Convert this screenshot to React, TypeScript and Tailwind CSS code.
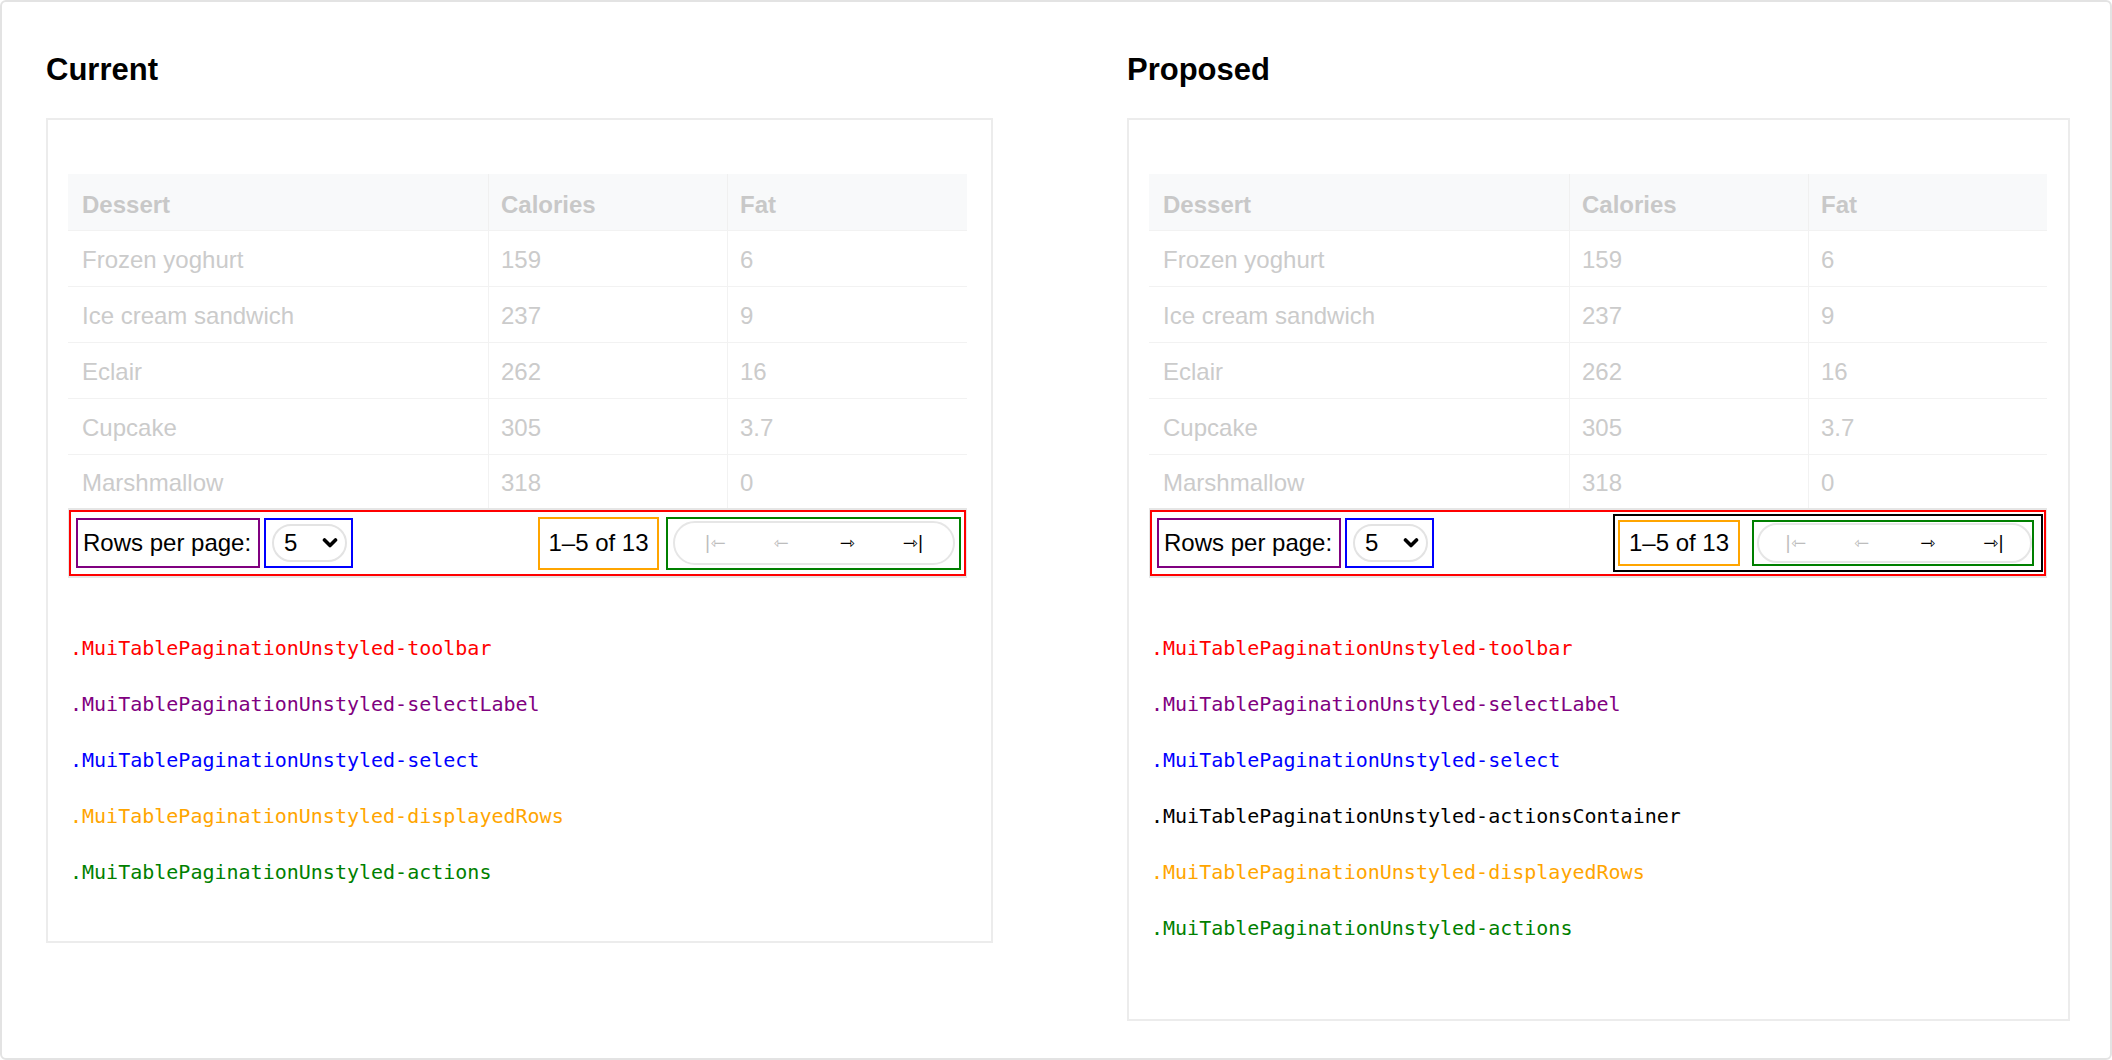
import React from "react"

const desserts: [string, string, string][] = [
  ["Frozen yoghurt", "159", "6"],
  ["Ice cream sandwich", "237", "9"],
  ["Eclair", "262", "16"],
  ["Cupcake", "305", "3.7"],
  ["Marshmallow", "318", "0"],
]

const sans = "font-['Liberation_Sans',Arial,sans-serif]"

function Chevron() {
  return (
    <svg width="16" height="12" viewBox="0 0 16 12" className="shrink-0">
      <polyline
        points="2.5,3 8,8.5 13.5,3"
        fill="none"
        stroke="#000"
        strokeWidth="3.6"
        strokeLinecap="round"
        strokeLinejoin="round"
      />
    </svg>
  )
}

function PageButton({ label, disabled }: { label: string; disabled?: boolean }) {
  return (
    <button
      className={
        "flex h-full w-[66px] items-center justify-center font-['DejaVu_Sans',sans-serif] text-[18px] leading-none " +
        (disabled ? "text-[#bdbdbd]" : "text-black")
      }
    >
      {label}
    </button>
  )
}

function Actions({ compact }: { compact?: boolean }) {
  return (
    <div
      className={
        "flex items-center border-2 border-[#008000] " +
        (compact ? "h-[46px] w-[282px] pl-[3px]" : "h-[53px] w-[295px] pl-[5px] pr-[4px]")
      }
    >
      <div
        className={
          "flex flex-1 items-center justify-center rounded-full border-2 border-[#e6e6e6] " +
          (compact ? "h-[40px]" : "h-[44px]")
        }
      >
        <PageButton label="|⇽" disabled />
        <PageButton label="⇽" disabled />
        <PageButton label="⇾" />
        <PageButton label="⇾|" />
      </div>
    </div>
  )
}

function Toolbar({ proposed }: { proposed?: boolean }) {
  const displayed = (
    <div
      className={
        "flex items-center justify-center border-2 border-[#ffa500] text-[24px] text-black " +
        (proposed ? "h-[46px] w-[122px]" : "h-[53px] w-[121px]")
      }
    >
      1–5 of 13
    </div>
  )

  return (
    <div className="border-x border-t-2 border-b-2 border-[#e6e6e6]">
      <div className={"flex h-[66px] items-center border-2 border-[#ff0000] pl-[5px] " + (proposed ? "pr-px" : "pr-[3px]")}>
        <div className="flex h-[50px] w-[184px] items-center border-2 border-[#800080] px-[5px] text-[24px] text-black">
          Rows per page:
        </div>
        <div className="ml-[4px] flex h-[50px] w-[89px] items-center border-2 border-[#0000ff] pl-[6px]">
          <div className="flex h-[38px] w-[75px] items-center justify-between rounded-full border-2 border-[#e3e3e3] pl-[10px] pr-[7px] text-[24px] text-black">
            <span>5</span>
            <Chevron />
          </div>
        </div>
        <div className="flex-1" />
        {proposed ? (
          <div className="flex h-[58px] w-[430px] items-center border-2 border-black pl-[3px]">
            {displayed}
            <div className="ml-[12px]">
              <Actions compact />
            </div>
          </div>
        ) : (
          <div className="flex items-center gap-[7px]">
            {displayed}
            <Actions />
          </div>
        )}
      </div>
    </div>
  )
}

function DessertTable({ proposed }: { proposed?: boolean }) {
  return (
    <div className={sans + " " + (proposed ? "w-[898px]" : "w-[899px]")}>
      <div className="grid h-[57px] grid-cols-[420px_239px_1fr] border-b border-[#f2f2f2] bg-[#f8f9fa] text-[24px] font-bold text-[#c8c8c8]">
        <div className="flex items-center pl-[14px] pt-[6px]">Dessert</div>
        <div className="flex items-center border-l border-[#f0f0f0] pl-[12px] pt-[6px]">Calories</div>
        <div className="flex items-center border-l border-[#f0f0f0] pl-[12px] pt-[6px]">Fat</div>
      </div>
      {desserts.map(([name, calories, fat], i) => (
        <div
          key={name}
          className={
            "grid grid-cols-[420px_239px_1fr] text-[24px] text-[#cbcbcb] " +
            (i < desserts.length - 1 ? "h-[56px] border-b border-[#f2f2f2]" : "h-[53px]")
          }
        >
          <div className="flex items-center pl-[14px] pt-[2px]">{name}</div>
          <div className="flex items-center border-l border-[#f2f2f2] pl-[12px] pt-[2px]">{calories}</div>
          <div className="flex items-center border-l border-[#f2f2f2] pl-[12px] pt-[2px]">{fat}</div>
        </div>
      ))}
      <Toolbar proposed={proposed} />
    </div>
  )
}

function ClassList({ items }: { items: { name: string; color: string }[] }) {
  return (
    <div className="mt-[42px] pl-[2px] font-['DejaVu_Sans_Mono',monospace] text-[20px]">
      {items.map((item) => (
        <div key={item.name} className={"h-[56px] leading-[56px] " + item.color}>
          .MuiTablePaginationUnstyled-{item.name}
        </div>
      ))}
    </div>
  )
}

const currentClasses = [
  { name: "toolbar", color: "text-[#ff0000]" },
  { name: "selectLabel", color: "text-[#800080]" },
  { name: "select", color: "text-[#0000ff]" },
  { name: "displayedRows", color: "text-[#ffa500]" },
  { name: "actions", color: "text-[#008000]" },
]

const proposedClasses = [
  { name: "toolbar", color: "text-[#ff0000]" },
  { name: "selectLabel", color: "text-[#800080]" },
  { name: "select", color: "text-[#0000ff]" },
  { name: "actionsContainer", color: "text-black" },
  { name: "displayedRows", color: "text-[#ffa500]" },
  { name: "actions", color: "text-[#008000]" },
]

export default function App() {
  return (
    <div className="h-[1060px] w-[2112px] overflow-hidden rounded-[6px] border-2 border-[#e3e3e3] bg-white">
      <div className="flex pl-[44px] pt-[50px]">
        {/* Current */}
        <div className="w-[947px]">
          <h2 className={sans + " text-[31px] font-bold leading-[36px] text-black"}>Current</h2>
          <div className="mt-[30px] h-[825px] border-2 border-[#ececec] px-[20px] pt-[54px]">
            <DessertTable />
            <ClassList items={currentClasses} />
          </div>
        </div>

        {/* Proposed */}
        <div className="ml-[134px] w-[943px]">
          <h2 className={sans + " text-[31px] font-bold leading-[36px] text-black"}>Proposed</h2>
          <div className="mt-[30px] h-[903px] border-2 border-[#ececec] px-[20px] pt-[54px]">
            <DessertTable proposed />
            <ClassList items={proposedClasses} />
          </div>
        </div>
      </div>
    </div>
  )
}
